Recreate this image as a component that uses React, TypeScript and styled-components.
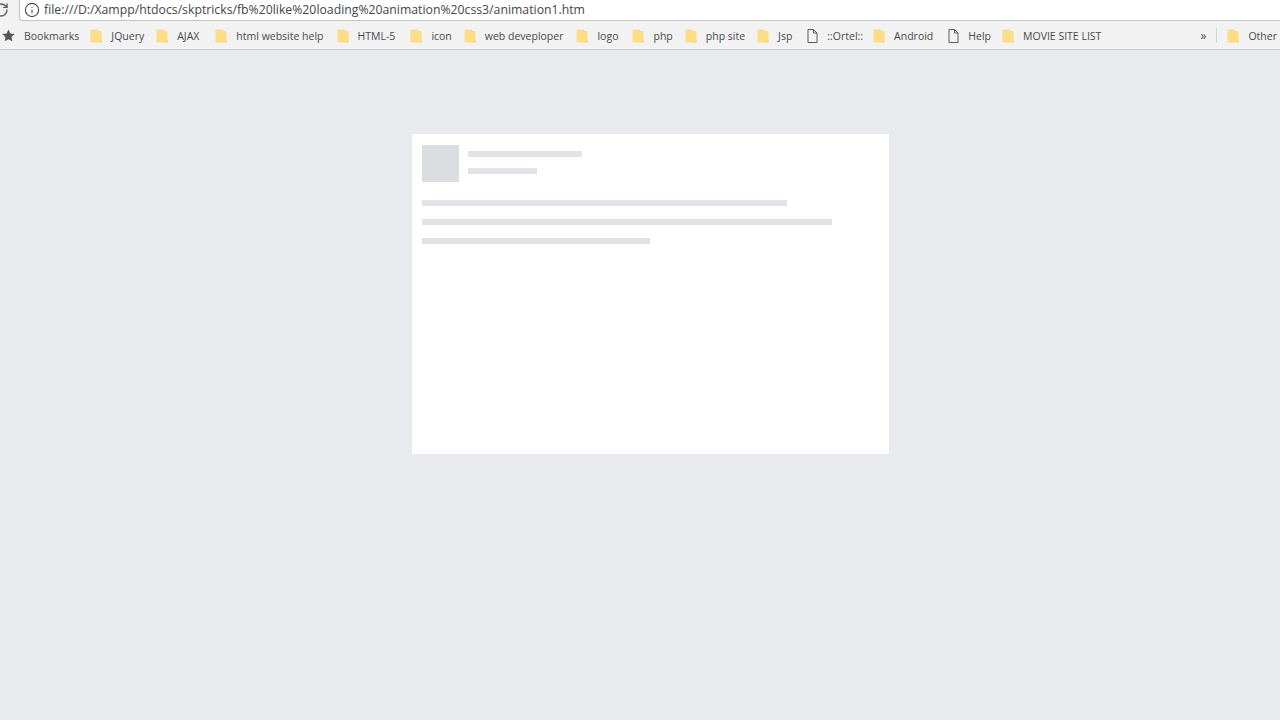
import React from 'react';
import styled, { createGlobalStyle } from 'styled-components';
import { Info, RotateCw } from 'lucide-react';

const GlobalStyle = createGlobalStyle`
  html, body {
    margin: 0;
    padding: 0;
    height: 100%;
    overflow: hidden;
    background: #e9eaed;
  }
`;

const Page = styled.div`
  display: flex;
  width: 1280px;
  height: 720px;
  flex-direction: column;
  overflow: hidden;
  background: #e9eaed;
  font-family: 'Open Sans', 'Noto Sans', sans-serif;
`;

// Browser chrome

const AddressRow = styled.div`
  display: flex;
  height: 22px;
  align-items: flex-start;
  background: #f2f2f2;
  flex: none;
`;

const Reload = styled.div`
  display: flex;
  width: 17px;
  height: 19px;
  align-items: center;
  margin-left: -7px;
  color: #5a5d61;
  flex: none;
`;

const AddressBox = styled.div`
  display: flex;
  height: 21px;
  flex: 1;
  align-items: center;
  padding-left: 4px;
  border-bottom: 1px solid #c4c4c4;
  border-left: 1px solid #c4c4c4;
  margin-left: 9px;
  background: #ffffff;
  border-bottom-left-radius: 3px;
  box-sizing: border-box;
  color: #4d4f52;
`;

const Url = styled.span`
  margin: -2px 0 0 4px;
  color: #44464a;
  font-size: 12.25px;
  white-space: nowrap;
`;

const BookmarkBar = styled.div`
  display: flex;
  height: 28px;
  align-items: center;
  padding: 0 3px 0 2px;
  border-bottom: 1px solid #c9cacc;
  background: #f2f2f2;
  box-sizing: border-box;
  flex: none;
`;

const BookmarkItem = styled.div<{ $gap: number }>`
  display: flex;
  align-items: center;
  margin-right: ${props => props.$gap}px;
  gap: 9px;
  white-space: nowrap;
`;

const BookmarkLabel = styled.span`
  color: #48494c;
  font-size: 10.5px;
`;

const Chevron = styled.span`
  margin-left: auto;
  color: #4a4a4a;
  font-size: 12px;
`;

const Separator = styled.div`
  width: 1px;
  height: 15px;
  margin: 0 10px;
  background: #d2d3d5;
`;

const OtherBookmarks = styled.div`
  display: flex;
  align-items: center;
  gap: 9px;
  white-space: nowrap;
`;

const FolderIcon = () => (
  <svg width="12" height="14" viewBox="0 0 12 14">
    <path d="M1 0.5h6.5l1 1.5H10.5a1 1 0 0 1 1 1v9.5a1 1 0 0 1-1 1H1.5a1 1 0 0 1-1-1V1a.5.5 0 0 1 .5-.5z" fill="#fcdd85" />
    <path d="M10 13.5l1.5-2.5v1.5a1 1 0 0 1-1 1z" fill="#e6c46c" />
  </svg>
);

const PageIcon = () => (
  <svg width="11" height="14" viewBox="0 0 11 14" fill="none" stroke="#5b5c5f" strokeWidth="1">
    <path d="M1 .5h5.5L10 4v9.5H1z" />
    <path d="M6.5.5V4H10" />
  </svg>
);

const StarIcon = () => (
  <svg width="13" height="13" viewBox="0 0 24 24" fill="#55565a">
    <path d="M12 1l3.400 7.400 8 .9-5.900 5.400 1.600 8L12 18.700 4.900 22.700l1.600-8L.6 9.300l8-.9z" />
  </svg>
);

// Loading placeholder card

const Card = styled.div`
  display: flex;
  width: 477px;
  height: 320px;
  flex-direction: column;
  align-items: flex-start;
  padding: 11px 10px;
  margin: 84px 0 0 412px;
  background: #ffffff;
  box-sizing: border-box;
`;

const CardHead = styled.div`
  display: flex;
  margin-bottom: 18px;
  gap: 9px;
`;

const Avatar = styled.div`
  width: 37px;
  height: 37px;
  background: #dcdde0;
`;

const HeadLines = styled.div`
  display: flex;
  flex-direction: column;
  padding-top: 6px;
  gap: 11px;
`;

const Bar = styled.div<{ $width: number; $gap?: number }>`
  width: ${props => props.$width}px;
  height: 6px;
  margin-bottom: ${props => props.$gap ?? 0}px;
  background: #e2e3e6;
`;

type Bookmark = { label: string; gap: number; kind?: 'page' };

const bookmarks: Bookmark[] = [
  { label: 'JQuery', gap: 12 },
  { label: 'AJAX', gap: 16 },
  { label: 'html website help', gap: 13 },
  { label: 'HTML-5', gap: 15 },
  { label: 'icon', gap: 12 },
  { label: 'web deveploper', gap: 13 },
  { label: 'logo', gap: 14 },
  { label: 'php', gap: 12 },
  { label: 'php site', gap: 12 },
  { label: 'Jsp', gap: 15 },
  { label: '::Ortel::', gap: 10, kind: 'page' },
  { label: 'Android', gap: 15 },
  { label: 'Help', gap: 11, kind: 'page' },
  { label: 'MOVIE SITE LIST', gap: 13 },
];

const App = () => (
  <Page>
    <GlobalStyle />
    <AddressRow>
      <Reload>
        <RotateCw size={16} strokeWidth={2} />
      </Reload>
      <AddressBox>
        <Info size={16} strokeWidth={1.7} />
        <Url>file:///D:/Xampp/htdocs/skptricks/fb%20like%20loading%20animation%20css3/animation1.htm</Url>
      </AddressBox>
    </AddressRow>
    <BookmarkBar>
      <BookmarkItem $gap={11}>
        <StarIcon />
        <BookmarkLabel>Bookmarks</BookmarkLabel>
      </BookmarkItem>
      {bookmarks.map(item => (
        <BookmarkItem key={item.label} $gap={item.gap}>
          {item.kind === 'page' ? <PageIcon /> : <FolderIcon />}
          <BookmarkLabel>{item.label}</BookmarkLabel>
        </BookmarkItem>
      ))}
      <Chevron>»</Chevron>
      <Separator />
      <OtherBookmarks>
        <FolderIcon />
        <BookmarkLabel>Other</BookmarkLabel>
      </OtherBookmarks>
    </BookmarkBar>
    <Card>
      <CardHead>
        <Avatar />
        <HeadLines>
          <Bar $width={114} />
          <Bar $width={69} />
        </HeadLines>
      </CardHead>
      <Bar $width={365} $gap={13} />
      <Bar $width={410} $gap={13} />
      <Bar $width={228} />
    </Card>
  </Page>
);

export default App;
